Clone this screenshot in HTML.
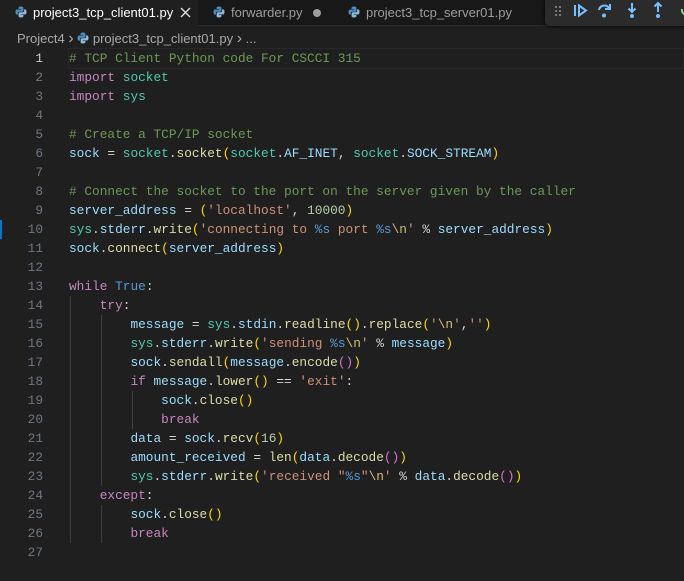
<!DOCTYPE html>
<html><head><meta charset="utf-8"><style>
*{margin:0;padding:0;box-sizing:border-box}
body{width:684px;height:574px;background:#1f1f1f;overflow:hidden;font-family:"Liberation Sans",sans-serif;position:relative}
.tabs{position:absolute;left:0;top:0;width:684px;height:26px;background:#181818;border-bottom:1px solid #2b2b2b}
.tab{position:absolute;top:0;height:26px;font-size:13px;line-height:25px;color:#9d9d9d;padding-left:33px}
.tab.a{background:#1f1f1f;color:#fff}
.py{position:absolute;left:15px;top:6px;width:12px;height:12px}
.tb{position:absolute;left:545px;top:0;width:150px;height:26px;background:#2b2b2b;border-radius:0 0 0 5px;box-shadow:0 0 4px #000}
.bc{position:absolute;top:30px;left:17px;font-size:13px;color:#a9a9a9;line-height:18px}
.bc .ch{font-size:16px;color:#aaa}
.code{position:absolute;left:0;top:49px;font-family:"Liberation Mono",monospace;font-size:12.8px;line-height:19px;white-space:pre;color:#d4d4d4}
.ln{position:absolute;left:0;width:43px;text-align:right;color:#6e7681}
.cl{position:absolute;left:69px}
.k{color:#c586c0}.m{color:#4ec9b0}.v{color:#9cdcfe}.f{color:#dcdcaa}.s{color:#ce9178}.n{color:#b5cea8}.c{color:#6a9955}.b{color:#569cd6}.e{color:#d7ba7d}.p1{color:#ffd700}.p2{color:#da70d6}
.g{position:absolute;width:1px;background:#404040}
</style></head><body>
<div class="tabs">
<div class="tab a" style="left:0;width:198px"><svg class="py" viewBox="0 0 12 12"><path d="M6 0.5C3.5 0.5 3.6 1.6 3.6 1.6V3H6.1v.5H2.2S0.5 3.3 0.5 6s1.5 2.6 1.5 2.6h.9V7.3s-.1-1.5 1.5-1.5h2.6s1.4 0 1.4-1.4V1.9S8.6.5 6 .5z" fill="#4b8bbe"/><path d="M6 11.5c2.5 0 2.4-1.1 2.4-1.1V9H5.9v-.5h3.9s1.7.2 1.7-2.5-1.5-2.6-1.5-2.6h-.9v1.3s.1 1.5-1.5 1.5H5s-1.4 0-1.4 1.4v2.5S3.4 11.5 6 11.5z" fill="#8fb8d8"/></svg>project3_tcp_client01.py<svg style="position:absolute;left:180px;top:7px" width="11" height="11" viewBox="0 0 11 11"><path d="M1 1l9 9M10 1l-9 9" stroke="#ddd" stroke-width="1.4"/></svg></div>
<div class="tab" style="left:198px;width:134px"><svg class="py" viewBox="0 0 12 12"><path d="M6 0.5C3.5 0.5 3.6 1.6 3.6 1.6V3H6.1v.5H2.2S0.5 3.3 0.5 6s1.5 2.6 1.5 2.6h.9V7.3s-.1-1.5 1.5-1.5h2.6s1.4 0 1.4-1.4V1.9S8.6.5 6 .5z" fill="#4b8bbe"/><path d="M6 11.5c2.5 0 2.4-1.1 2.4-1.1V9H5.9v-.5h3.9s1.7.2 1.7-2.5-1.5-2.6-1.5-2.6h-.9v1.3s.1 1.5-1.5 1.5H5s-1.4 0-1.4 1.4v2.5S3.4 11.5 6 11.5z" fill="#8fb8d8"/></svg>forwarder.py<span style="position:absolute;left:115px;top:9px;width:8px;height:8px;border-radius:50%;background:#9d9d9d"></span></div>
<div class="tab" style="left:333px;width:200px"><svg class="py" viewBox="0 0 12 12"><path d="M6 0.5C3.5 0.5 3.6 1.6 3.6 1.6V3H6.1v.5H2.2S0.5 3.3 0.5 6s1.5 2.6 1.5 2.6h.9V7.3s-.1-1.5 1.5-1.5h2.6s1.4 0 1.4-1.4V1.9S8.6.5 6 .5z" fill="#4b8bbe"/><path d="M6 11.5c2.5 0 2.4-1.1 2.4-1.1V9H5.9v-.5h3.9s1.7.2 1.7-2.5-1.5-2.6-1.5-2.6h-.9v1.3s.1 1.5-1.5 1.5H5s-1.4 0-1.4 1.4v2.5S3.4 11.5 6 11.5z" fill="#8fb8d8"/></svg>project3_tcp_server01.py</div>
</div>
<div class="tb"><svg width="150" height="26" viewBox="0 0 150 26">
<g fill="#777"><rect x="10" y="6" width="2" height="2"/><rect x="14" y="6" width="2" height="2"/><rect x="10" y="10" width="2" height="2"/><rect x="14" y="10" width="2" height="2"/><rect x="10" y="14" width="2" height="2"/><rect x="14" y="14" width="2" height="2"/></g>
<g stroke="#75beff" stroke-width="2" fill="none"><path d="M30 5v11M34 5.5l7 5-7 5z"/><path d="M54 10a5.5 5.5 0 0 1 10-2"/><path d="M65 4v5h-5"/><path d="M87 3v9M83.5 8.5l3.5 3.5 3.5-3.5"/><path d="M113 12V3M109.5 6.5l3.5-3.5 3.5 3.5"/><path d="M137 9a5 5 0 1 0 4-4" stroke="#89d185"/></g>
<g fill="#75beff"><circle cx="59" cy="15.5" r="2"/><circle cx="87" cy="16" r="2"/><circle cx="113" cy="16" r="2"/></g></svg></div>
<div class="bc">Project4 <span class="ch">›</span> <svg width="12" height="12" viewBox="0 0 12 12" style="vertical-align:-1px"><path d="M6 0.5C3.5 0.5 3.6 1.6 3.6 1.6V3H6.1v.5H2.2S0.5 3.3 0.5 6s1.5 2.6 1.5 2.6h.9V7.3s-.1-1.5 1.5-1.5h2.6s1.4 0 1.4-1.4V1.9S8.6.5 6 .5z" fill="#4b8bbe"/><path d="M6 11.5c2.5 0 2.4-1.1 2.4-1.1V9H5.9v-.5h3.9s1.7.2 1.7-2.5-1.5-2.6-1.5-2.6h-.9v1.3s.1 1.5-1.5 1.5H5s-1.4 0-1.4 1.4v2.5S3.4 11.5 6 11.5z" fill="#8fb8d8"/></svg> project3_tcp_client01.py <span class="ch">›</span> ...</div>
<div style="position:absolute;left:68px;top:48px;width:616px;height:21px;border:1px solid #282828"></div>
<div style="position:absolute;left:0;top:220px;width:2px;height:19px;background:#0078d4"></div>
<div class="g" style="left:70px;top:296px;height:247px"></div>
<div class="g" style="left:101px;top:315px;height:171px"></div>
<div class="g" style="left:101px;top:505px;height:38px"></div>
<div class="g" style="left:132px;top:391px;height:38px"></div>
<div class="code" style="width:684px">
<div class="ln" style="top:0;color:#ccc">1</div><div class="cl" style="top:0"><span class="c"># TCP Client Python code For CSCCI 315</span></div>
<div class="ln" style="top:19px">2</div><div class="cl" style="top:19px"><span class="k">import</span> <span class="m">socket</span></div>
<div class="ln" style="top:38px">3</div><div class="cl" style="top:38px"><span class="k">import</span> <span class="m">sys</span></div>
<div class="ln" style="top:57px">4</div>
<div class="ln" style="top:76px">5</div><div class="cl" style="top:76px"><span class="c"># Create a TCP/IP socket</span></div>
<div class="ln" style="top:95px">6</div><div class="cl" style="top:95px"><span class="v">sock</span> = <span class="m">socket</span>.<span class="f">socket</span><span class="p1">(</span><span class="m">socket</span>.<span class="v">AF_INET</span>, <span class="m">socket</span>.<span class="v">SOCK_STREAM</span><span class="p1">)</span></div>
<div class="ln" style="top:114px">7</div>
<div class="ln" style="top:133px">8</div><div class="cl" style="top:133px"><span class="c"># Connect the socket to the port on the server given by the caller</span></div>
<div class="ln" style="top:152px">9</div><div class="cl" style="top:152px"><span class="v">server_address</span> = <span class="p1">(</span><span class="s">'localhost'</span>, <span class="n">10000</span><span class="p1">)</span></div>
<div class="ln" style="top:171px">10</div><div class="cl" style="top:171px"><span class="m">sys</span>.<span class="v">stderr</span>.<span class="f">write</span><span class="p1">(</span><span class="s">'connecting to </span><span class="b">%s</span><span class="s"> port </span><span class="b">%s</span><span class="e">\n</span><span class="s">'</span> % <span class="v">server_address</span><span class="p1">)</span></div>
<div class="ln" style="top:190px">11</div><div class="cl" style="top:190px"><span class="v">sock</span>.<span class="f">connect</span><span class="p1">(</span><span class="v">server_address</span><span class="p1">)</span></div>
<div class="ln" style="top:209px">12</div>
<div class="ln" style="top:228px">13</div><div class="cl" style="top:228px"><span class="k">while</span> <span class="b">True</span>:</div>
<div class="ln" style="top:247px">14</div><div class="cl" style="top:247px">    <span class="k">try</span>:</div>
<div class="ln" style="top:266px">15</div><div class="cl" style="top:266px">        <span class="v">message</span> = <span class="m">sys</span>.<span class="v">stdin</span>.<span class="f">readline</span><span class="p1">()</span>.<span class="f">replace</span><span class="p1">(</span><span class="s">'</span><span class="e">\n</span><span class="s">'</span>,<span class="s">''</span><span class="p1">)</span></div>
<div class="ln" style="top:285px">16</div><div class="cl" style="top:285px">        <span class="m">sys</span>.<span class="v">stderr</span>.<span class="f">write</span><span class="p1">(</span><span class="s">'sending </span><span class="b">%s</span><span class="e">\n</span><span class="s">'</span> % <span class="v">message</span><span class="p1">)</span></div>
<div class="ln" style="top:304px">17</div><div class="cl" style="top:304px">        <span class="v">sock</span>.<span class="f">sendall</span><span class="p1">(</span><span class="v">message</span>.<span class="f">encode</span><span class="p2">()</span><span class="p1">)</span></div>
<div class="ln" style="top:323px">18</div><div class="cl" style="top:323px">        <span class="k">if</span> <span class="v">message</span>.<span class="f">lower</span><span class="p1">()</span> == <span class="s">'exit'</span>:</div>
<div class="ln" style="top:342px">19</div><div class="cl" style="top:342px">            <span class="v">sock</span>.<span class="f">close</span><span class="p1">()</span></div>
<div class="ln" style="top:361px">20</div><div class="cl" style="top:361px">            <span class="k">break</span></div>
<div class="ln" style="top:380px">21</div><div class="cl" style="top:380px">        <span class="v">data</span> = <span class="v">sock</span>.<span class="f">recv</span><span class="p1">(</span><span class="n">16</span><span class="p1">)</span></div>
<div class="ln" style="top:399px">22</div><div class="cl" style="top:399px">        <span class="v">amount_received</span> = <span class="f">len</span><span class="p1">(</span><span class="v">data</span>.<span class="f">decode</span><span class="p2">()</span><span class="p1">)</span></div>
<div class="ln" style="top:418px">23</div><div class="cl" style="top:418px">        <span class="m">sys</span>.<span class="v">stderr</span>.<span class="f">write</span><span class="p1">(</span><span class="s">'received "</span><span class="b">%s</span><span class="s">"</span><span class="e">\n</span><span class="s">'</span> % <span class="v">data</span>.<span class="f">decode</span><span class="p2">()</span><span class="p1">)</span></div>
<div class="ln" style="top:437px">24</div><div class="cl" style="top:437px">    <span class="k">except</span>:</div>
<div class="ln" style="top:456px">25</div><div class="cl" style="top:456px">        <span class="v">sock</span>.<span class="f">close</span><span class="p1">()</span></div>
<div class="ln" style="top:475px">26</div><div class="cl" style="top:475px">        <span class="k">break</span></div>
<div class="ln" style="top:494px">27</div>
</div>
</body></html>
